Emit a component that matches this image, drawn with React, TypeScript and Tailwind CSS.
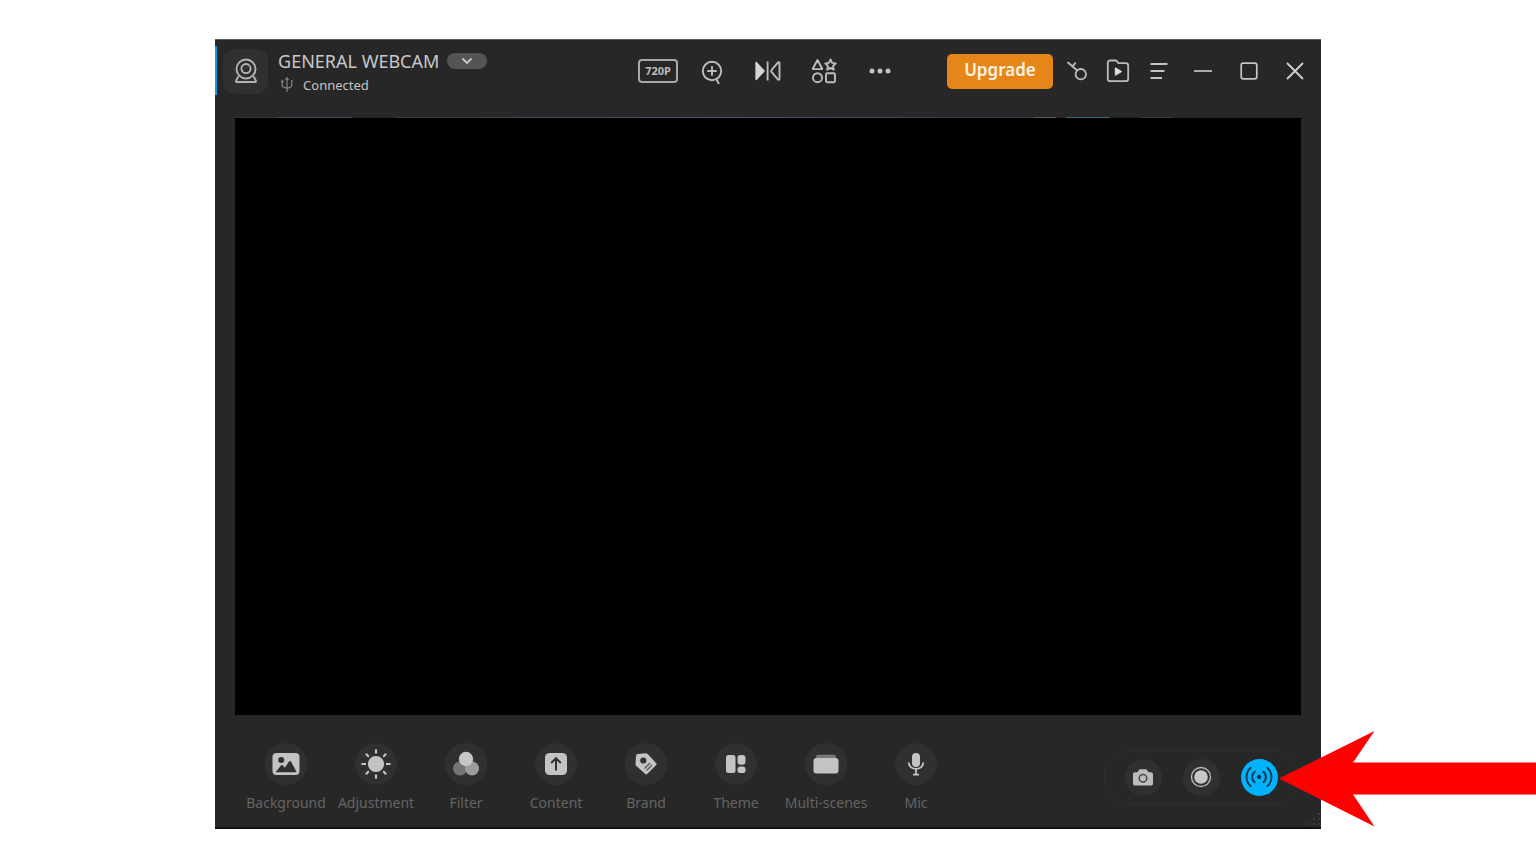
import React, { useState } from 'react';

const CameraTile = () => (
  <svg viewBox="0 0 24 26" className="h-[26px] w-6" fill="none" stroke="#b4b4b4" strokeWidth="1.8" strokeLinejoin="round">
    <circle cx="12" cy="11" r="9.5" />
    <circle cx="12" cy="10.6" r="4.6" />
    <path d="M4.5 18.2 2.2 22.500a.9.9 0 0 0 .8 1.500h18a.9.9 0 0 0 .8-1.500l-2.300-4.300" />
  </svg>
);

const UsbIcon = () => (
  <svg viewBox="0 0 12 16" className="h-4 w-3" fill="none" stroke="#858585" strokeWidth="1.2">
    <path d="M6 1.500V15M1.200 5v3.800c0 1 .8 1.800 4.800 2.400M10.800 4v4.800c0 1-.8 1.800-4.800 2.400" />
    <path d="M4.500 3 6 .8 7.500 3" />
    <circle cx="1.400" cy="4.500" r=".7" fill="#858585" />
    <path d="M10 3.500h1.500" />
  </svg>
);

const ZoomIcon = () => (
  <svg viewBox="0 0 24 26" className="h-[26px] w-6 shrink-0" fill="none" stroke="#bcbcbc" strokeWidth="1.9" strokeLinecap="round">
    <circle cx="12" cy="13" r="9.2" />
    <path d="M8 13h8M12 9v8M16.500 21.500l2.200 4" />
  </svg>
);

const MirrorIcon = () => (
  <svg viewBox="0 0 26 20" className="h-5 w-[26px] shrink-0" fill="none" stroke="#bcbcbc" strokeWidth="1.9" strokeLinejoin="round">
    <path d="M1.300 1.800v16.400L8.700 10z" fill="#d6d6d6" stroke="#d6d6d6" />
    <path d="M12.600 .5v19" />
    <path d="M24.500 2.200c0-1-1-1.300-1.700-.5L16.500 9.200a1.200 1.200 0 0 0 0 1.600l6.300 7.500c.7.800 1.700.5 1.700-.5z" />
  </svg>
);

const ShapesIcon = () => (
  <svg viewBox="0 0 26 26" className="size-[26px] shrink-0" fill="none" stroke="#bcbcbc" strokeWidth="1.9" strokeLinejoin="round">
    <path d="M6.500 2 11 10.200c.3.600 0 .9-.5.900h-8c-.5 0-.8-.3-.5-.9z" />
    <path d="m19.500 1.500 1.600 3.400 3.600.5-2.600 2.600.6 3.700-3.200-1.800-3.200 1.800.6-3.700-2.600-2.600 3.600-.5z" />
    <circle cx="6.500" cy="19.700" r="4.500" />
    <rect x="15" y="15.200" width="9" height="9" rx="1.200" />
  </svg>
);

const KeyIcon = () => (
  <svg viewBox="0 0 22 22" className="size-[22px]" fill="none" stroke="#bcbcbc" strokeWidth="1.8" strokeLinecap="round">
    <circle cx="14.800" cy="14.200" r="5.200" />
    <path d="M2 2.500 11 10.200M6.500 6.300 9.200 3.200" />
  </svg>
);

const FolderIcon = () => (
  <svg viewBox="0 0 24 24" className="size-6" fill="none" stroke="#bcbcbc" strokeWidth="1.8" strokeLinejoin="round">
    <path d="M1.800 4A2.500 2.500 0 0 1 4.300 1.500h5.200c.8 0 1.300.4 1.700 1l.6.900c.4.600.9.800 1.600.800h6.300A2.500 2.500 0 0 1 22.200 6.700v13a2.500 2.500 0 0 1-2.500 2.500H4.300a2.500 2.500 0 0 1-2.500-2.500z" />
    <path d="M9.300 8.800v7.500l6.400-3.700z" fill="#dedede" stroke="#dedede" strokeWidth="1" />
  </svg>
);

const BackgroundIcon = () => (
  <svg viewBox="0 0 28 22" className="h-[22px] w-7">
    <rect x=".5" y="0" width="27" height="22" rx="4" fill="#c3c3c3" />
    <circle cx="9.200" cy="7" r="3" fill="#303030" />
    <path d="M3.500 19.300 9 12.500c.6-.7 1.300-.7 1.900 0l1.900 2.300L17 8.600c.6-.8 1.500-.8 2 0l5.700 10.700z" fill="#303030" />
  </svg>
);

const AdjustmentIcon = () => (
  <svg viewBox="0 0 30 30" className="size-[30px]" fill="#c3c3c3" stroke="#c3c3c3" strokeWidth="2.200">
    <circle cx="15" cy="15" r="7" />
    <path d="M15 .5v4M15 25.500v4M.5 15h4.500M25 15h4.500M4.800 4.800l3 3M22.200 22.200l3 3M25.200 4.800l-3 3M7.800 22.200l-3 3" />
  </svg>
);

const FilterIcon = () => (
  <svg viewBox="0 0 28 26" className="h-[26px] w-7">
    <circle cx="8" cy="17.500" r="7" fill="#747474" />
    <circle cx="20" cy="17.500" r="7" fill="#9b9b9b" />
    <circle cx="14" cy="8" r="7.200" fill="#c6c6c6" />
  </svg>
);

const ContentIcon = () => (
  <svg viewBox="0 0 22 22" className="size-[22px]">
    <rect width="22" height="22" rx="4.500" fill="#c3c3c3" />
    <path d="M11 17.500V5.500M6.200 10 11 5.200l4.800 4.800" fill="none" stroke="#303030" strokeWidth="2" />
  </svg>
);

const BrandIcon = () => (
  <svg viewBox="0 0 22 22" className="size-[22px]">
    <path d="M3 1 10.500.2c.9 0 1.600.2 2.200.9l8.300 8.900c.7.800.7 1.600 0 2.300l-8.600 8.400c-.8.8-1.600.8-2.300 0L1.300 13C.7 12.300.5 11.700.5 10.900l.5-7.900C1.100 1.800 1.800 1.100 3 1z" fill="#c3c3c3" />
    <circle cx="8.300" cy="7.500" r="3.100" fill="#303030" />
    <path d="m9.500 15.500 5.500-5.500M11.500 17.500l5.500-5.500" stroke="#555" strokeWidth="1.200" />
  </svg>
);

const ThemeIcon = () => (
  <svg viewBox="0 0 20 18" className="h-[18px] w-5" fill="#c3c3c3">
    <rect width="9.500" height="18" rx="2.500" />
    <rect x="11.500" width="8" height="9.800" rx="3" />
    <rect x="11.500" y="11.500" width="8" height="6.500" rx="2.800" />
  </svg>
);

const ScenesIcon = () => (
  <svg viewBox="0 0 26 20" className="h-5 w-[26px]">
    <path d="M3 4.500V3a2.200 2.200 0 0 1 2.200-2.200h15.600A2.200 2.200 0 0 1 23 3v1.500z" fill="#777" />
    <rect x=".5" y="4" width="25" height="15.500" rx="3" fill="#c3c3c3" />
  </svg>
);

const MicIcon = () => (
  <svg viewBox="0 0 18 24" className="h-6 w-[18px]" fill="none" stroke="#c3c3c3" strokeWidth="1.800">
    <rect x="5" y="1" width="8" height="14" rx="4" fill="#c3c3c3" stroke="none" />
    <path d="M1.800 10.500c0 8.600 14.400 8.600 14.400 0M9 17v5.500M6 22.700h6" />
  </svg>
);

const PhotoIcon = () => (
  <svg viewBox="0 0 20 17" className="h-[17px] w-5">
    <path d="M2.200 3.200h2.300l1.300-2c.4-.7.9-1 1.700-1h5c.8 0 1.300.3 1.700 1l1.300 2h2.300c1.300 0 2.200.9 2.200 2.200v9c0 1.300-.9 2.200-2.200 2.200H2.200C.9 16.600 0 15.700 0 14.400v-9c0-1.300.9-2.200 2.200-2.200z" fill="#bcbcbc" />
    <circle cx="10" cy="9.300" r="3.800" fill="none" stroke="#4a4a4a" strokeWidth="1.500" />
  </svg>
);

const RecordIcon = () => (
  <svg viewBox="0 0 22 22" className="size-[22px]">
    <circle cx="11" cy="11" r="9.500" fill="none" stroke="#b5b5b5" strokeWidth="1.400" />
    <circle cx="11" cy="11" r="6.800" fill="#c8c8c8" />
  </svg>
);

const BroadcastIcon = () => (
  <svg viewBox="0 0 28 22" className="h-[22px] w-7" fill="none" stroke="#12384a" strokeWidth="1.900">
    <circle cx="14" cy="11" r="2.200" fill="#12384a" stroke="none" />
    <path d="M10.300 5.200c-4.300 3-4.300 8.600 0 11.600M17.700 5.200c4.300 3 4.300 8.600 0 11.600" />
    <path d="M6.300 1.300c-6.400 5-6.400 14.400 0 19.400M21.700 1.300c6.400 5 6.400 14.400 0 19.400" />
  </svg>
);

const tools = [
  { name: 'Background', icon: <BackgroundIcon /> },
  { name: 'Adjustment', icon: <AdjustmentIcon /> },
  { name: 'Filter', icon: <FilterIcon /> },
  { name: 'Content', icon: <ContentIcon /> },
  { name: 'Brand', icon: <BrandIcon /> },
  { name: 'Theme', icon: <ThemeIcon /> },
  { name: 'Multi-scenes', icon: <ScenesIcon /> },
  { name: 'Mic', icon: <MicIcon /> },
];

const IconButton: React.FC<{ label: string; children: React.ReactNode }> = ({ label, children }) => (
  <button aria-label={label} className="flex size-6 shrink-0 items-center justify-center">
    {children}
  </button>
);

const Header = () => (
  <header className="grid h-[62px] grid-cols-[1fr_auto_1fr] items-center pl-2 pr-3.5">
    <div className="flex items-center gap-2.5">
      <div className="flex size-[45px] items-center justify-center rounded-xl bg-[#303030]">
        <CameraTile />
      </div>
      <div className="pt-1">
        <div className="flex items-center gap-2">
          <h1 className="text-[18px] leading-6 text-[#c8c8c8]">GENERAL WEBCAM</h1>
          <button aria-label="Choose device" className="flex h-4 w-10 items-center justify-center rounded-full bg-[#545454]">
            <svg viewBox="0 0 12 8" className="h-2 w-3" fill="none" stroke="#c8c8c8" strokeWidth="1.800">
              <path d="m1.500 1.500 4.500 4.500 4.500-4.500" />
            </svg>
          </button>
        </div>
        <div className="flex items-center gap-2.5 pl-[3px] text-[13px] leading-6 text-[#c4c4c4]">
          <UsbIcon />
          Connected
        </div>
      </div>
    </div>

    <div className="flex items-center gap-[22px]">
      <button className="h-6 w-10 rounded-[4px] border-2 border-[#a8a8a8] text-[11px] font-bold leading-5 text-[#bcbcbc]">
        720P
      </button>
      <div className="flex items-center gap-8">
        <IconButton label="Zoom"><ZoomIcon /></IconButton>
        <IconButton label="Mirror"><MirrorIcon /></IconButton>
        <IconButton label="Effects"><ShapesIcon /></IconButton>
        <IconButton label="More">
          <svg viewBox="0 0 22 6" className="h-1.5 w-[22px]" fill="#c4c4c4">
            <circle cx="3" cy="3" r="2.500" />
            <circle cx="11" cy="3" r="2.500" />
            <circle cx="19" cy="3" r="2.500" />
          </svg>
        </IconButton>
      </div>
    </div>

    <div className="flex items-center justify-end gap-3">
      <button className="h-[35px] w-[106px] rounded-[5px] bg-[#e68619] pb-0.5 text-[17px] font-semibold leading-6 text-[#fff3e2]">
        Upgrade
      </button>
      <div className="flex items-center gap-5">
        <div className="flex items-center gap-[17px]">
          <IconButton label="Activate"><KeyIcon /></IconButton>
          <IconButton label="Recordings"><FolderIcon /></IconButton>
          <IconButton label="Menu">
            <svg viewBox="0 0 18 18" className="size-[18px]" stroke="#c4c4c4" strokeWidth="1.800">
              <path d="M.5 2h17M.5 9h14M.5 16h11.500" />
            </svg>
          </IconButton>
        </div>
        <div className="flex items-center gap-[22px]">
          <IconButton label="Minimize">
            <svg viewBox="0 0 18 18" className="size-[18px]" stroke="#c4c4c4" strokeWidth="1.700">
              <path d="M0 9h18" />
            </svg>
          </IconButton>
          <IconButton label="Maximize">
            <svg viewBox="0 0 18 18" className="size-[18px]" fill="none" stroke="#c4c4c4" strokeWidth="1.700">
              <rect x="1.200" y="1.200" width="15.600" height="15.600" rx="2" />
            </svg>
          </IconButton>
          <IconButton label="Close">
            <svg viewBox="0 0 18 18" className="size-[18px]" stroke="#d0d0d0" strokeWidth="1.800">
              <path d="m1 1 16 16M17 1 1 17" />
            </svg>
          </IconButton>
        </div>
      </div>
    </div>
  </header>
);

export default function App() {
  const [live, setLive] = useState(true);

  return (
    <div className="min-h-screen bg-white pt-[39px] font-['Noto_Sans','Open_Sans',sans-serif]">
      <div className="relative">
        <main className="relative mx-auto w-[72%] border-b-2 border-t border-b-[#121212] border-t-[#5c5c5c] bg-[#272727]">
          <span className="absolute left-0 top-1.5 h-[49px] w-0.5 bg-[#0a9fdc]" />
          <Header />

          <section className="px-5 pt-[15px]">
            {/* sliver of the desktop showing above the preview */}
            <div className="flex h-px">
              <span className="w-[4%] bg-[#30343a]" />
              <span className="w-[7%] bg-[#414b5e]" />
              <span className="w-[4%] bg-[#1d1f22]" />
              <span className="w-[60%] bg-linear-to-r from-[#333b46] via-[#4a5870] to-[#2e3a4a]" />
              <span className="w-[2%] bg-[#5a5c5e]" />
              <span className="w-[1%] bg-[#202020]" />
              <span className="w-[4%] bg-[#3d6a78]" />
              <span className="w-[3%] bg-[#1b1e22]" />
              <span className="w-[3%] bg-[#3a3c40]" />
              <span className="grow bg-[#1c2228]" />
            </div>
            <div className="aspect-[1066/597] w-full bg-black" />
          </section>

          <footer className="flex items-start justify-between pb-[13px] pl-[26px] pr-[22px] pt-7">
            <nav className="flex">
              {tools.map((tool) => (
                <button key={tool.name} className="flex w-[90px] flex-col items-center gap-[7px] text-[14px] leading-[22px] text-[#646464]">
                  <span className="flex size-[42px] items-center justify-center rounded-full bg-[#303030]">{tool.icon}</span>
                  {tool.name}
                </button>
              ))}
            </nav>
            <div className="mt-[7px] flex h-[55px] items-center gap-[21px] rounded-full border border-[#303030] px-5">
              <button aria-label="Take photo" className="flex size-[37px] items-center justify-center rounded-full bg-[#303030]">
                <PhotoIcon />
              </button>
              <button aria-label="Record" className="flex size-[37px] items-center justify-center rounded-full bg-[#303030]">
                <RecordIcon />
              </button>
              <button
                aria-label="Broadcast"
                aria-pressed={live}
                onClick={() => setLive(!live)}
                className="flex size-[37px] items-center justify-center rounded-full bg-[#00b2fc]"
              >
                <BroadcastIcon />
              </button>
            </div>
          </footer>

          <svg viewBox="0 0 14 14" className="absolute bottom-0 right-0 size-3.5" fill="#3c3c3c">
            <path d="M11 0h2v2h-2zM6 5h2v2H6zM11 5h2v2h-2zM1 10h2v2H1zM6 10h2v2H6zM11 10h2v2h-2z" />
          </svg>
        </main>

        {/* pointer to the broadcast button */}
        <svg viewBox="0 0 257 96" className="absolute bottom-0.5 right-0 h-24 w-[257px]" fill="#ff0000">
          <path d="M0 47.500 95.500 0 74 31.500h183v32H74L95.500 95.500z" />
        </svg>
      </div>
    </div>
  );
}
